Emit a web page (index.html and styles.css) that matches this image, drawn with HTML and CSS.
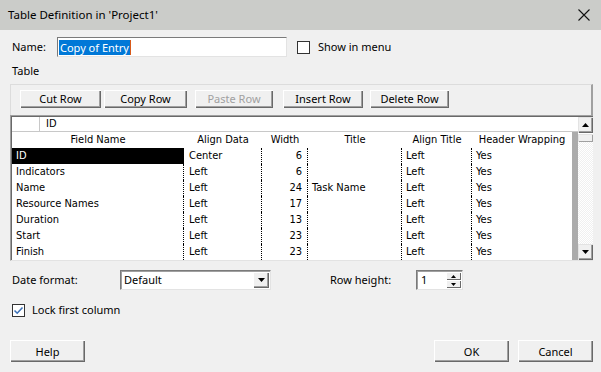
FILE: index.html
```html
<!DOCTYPE html>
<html>
<head>
<meta charset="utf-8">
<link rel="stylesheet" href="styles.css">
</head>
<body>
<div class="dialog">
  <div class="titlebar">
    <span class="title">Table Definition in 'Project1'</span>
    <svg class="close" width="12" height="12" viewBox="0 0 12 12"><path d="M0.5 0.5L11.5 11.5M11.5 0.5L0.5 11.5" stroke="#111" stroke-width="1.1" fill="none"/></svg>
  </div>
  <div class="content">
    <div class="name-row">
      <span class="lbl name-lbl">Name:</span>
      <div class="textbox"><span class="sel">Copy of Entry</span><span class="caret"></span></div>
      <span class="chk"></span>
      <span class="lbl chk-lbl">Show in menu</span>
    </div>
    <div class="lbl table-lbl">Table</div>
    <div class="tablebox">
      <div class="toolbar">
        <button class="btn tb cut">Cut Row</button>
        <button class="btn tb copy">Copy Row</button>
        <button class="btn tb paste" disabled>Paste Row</button>
        <button class="btn tb insert">Insert Row</button>
        <button class="btn tb delete">Delete Row</button>
      </div>
      <div class="gridbox">
        <div class="gridmain">
          <div class="editbar"><span class="editcell"></span><span class="edittext">ID</span></div>
          <div class="gridrow-wrap">
            <div class="grid">
              <div class="hd">Field Name</div><div class="hd">Align Data</div><div class="hd">Width</div><div class="hd">Title</div><div class="hd">Align Title</div><div class="hd">Header Wrapping</div>

              <div class="c c1 selcell">ID</div><div class="c c2">Center</div><div class="c c3">6</div><div class="c c4"></div><div class="c c5">Left</div><div class="c c6">Yes</div>
              <div class="c c1">Indicators</div><div class="c c2">Left</div><div class="c c3">6</div><div class="c c4"></div><div class="c c5">Left</div><div class="c c6">Yes</div>
              <div class="c c1">Name</div><div class="c c2">Left</div><div class="c c3">24</div><div class="c c4">Task Name</div><div class="c c5">Left</div><div class="c c6">Yes</div>
              <div class="c c1">Resource Names</div><div class="c c2">Left</div><div class="c c3">17</div><div class="c c4"></div><div class="c c5">Left</div><div class="c c6">Yes</div>
              <div class="c c1">Duration</div><div class="c c2">Left</div><div class="c c3">13</div><div class="c c4"></div><div class="c c5">Left</div><div class="c c6">Yes</div>
              <div class="c c1">Start</div><div class="c c2">Left</div><div class="c c3">23</div><div class="c c4"></div><div class="c c5">Left</div><div class="c c6">Yes</div>
              <div class="c c1">Finish</div><div class="c c2">Left</div><div class="c c3">23</div><div class="c c4"></div><div class="c c5">Left</div><div class="c c6">Yes</div>
            </div>
            <div class="graybar"></div>
          </div>
        </div>
        <div class="vscroll">
          <div class="sbtn"><svg width="7" height="4" viewBox="0 0 7 4"><path d="M3.5 0L7 4H0Z" fill="#000"/></svg></div>
          <div class="thumb"></div>
          <div class="track"></div>
          <div class="sbtn"><svg width="7" height="4" viewBox="0 0 7 4"><path d="M0 0H7L3.5 4Z" fill="#000"/></svg></div>
        </div>
      </div>
    </div>
    <div class="date-row">
      <span class="lbl date-lbl">Date format:</span>
      <div class="combo"><span class="combo-text">Default</span><span class="dropbtn"><svg width="7" height="4" viewBox="0 0 7 4"><path d="M0 0H7L3.5 4Z" fill="#000"/></svg></span></div>
      <span class="lbl rh-lbl">Row height:</span>
      <div class="spin"><span class="spin-text">1</span><span class="spinbtns"><span class="spinbtn"><svg width="5" height="3" viewBox="0 0 5 3"><path d="M2.5 0L5 3H0Z" fill="#000"/></svg></span><span class="spinbtn"><svg width="5" height="3" viewBox="0 0 5 3"><path d="M0 0H5L2.5 3Z" fill="#000"/></svg></span></span></div>
    </div>
    <div class="lock-row">
      <span class="chk checked"><svg width="11" height="11" viewBox="0 0 11 11"><path d="M1.5 5.5L4.2 8.2L9.5 2.5" stroke="#3d72b8" stroke-width="1.6" fill="none"/></svg></span>
      <span class="lbl lock-lbl">Lock first column</span>
    </div>
    <div class="btn-row">
      <button class="btn big">Help</button>
      <span class="spacer"></span>
      <button class="btn big">OK</button>
      <button class="btn big cancel">Cancel</button>
    </div>
  </div>
</div>
</body>
</html>
```

FILE: styles.css
```css
html, body {
  margin: 0;
  padding: 0;
}
body {
  width: 601px;
  height: 372px;
  background: #f0f0f0;
  font-family: "Noto Sans", "Open Sans", sans-serif;
  font-size: 11px;
  color: #000;
  overflow: hidden;
}
.dialog {
  width: 601px;
  height: 372px;
  display: flex;
  flex-direction: column;
}
.titlebar {
  height: 30px;
  background: #cbccc9;
  display: flex;
  align-items: center;
  padding: 0 11px 0 8px;
  box-sizing: border-box;
}
.title {
  flex: 1;
  font-size: 11.5px;
  line-height: 16px;
  margin-top: -1px;
}
.close {
  display: block;
}
.content {
  padding: 0 8px 0 12px;
}
.lbl {
  line-height: 16px;
  white-space: nowrap;
}
.name-row {
  margin-top: 7px;
  height: 20px;
  display: flex;
  align-items: center;
}
.name-lbl {
  width: 45px;
}
.textbox {
  width: 230px;
  height: 20px;
  box-sizing: border-box;
  background: #fff;
  border-top: 1px solid #7a7a7a;
  border-left: 1px solid #7a7a7a;
  border-right: 1px solid #e3e3e3;
  border-bottom: 1px solid #e3e3e3;
  padding: 2px 0 0 1px;
  display: flex;
  align-items: flex-start;
}
.sel {
  background: #0078d7;
  color: #fff;
  line-height: 15px;
  padding: 0 1px;
}
.caret {
  width: 1px;
  height: 15px;
  background: #d85a1a;
}
.chk {
  width: 13px;
  height: 13px;
  box-sizing: border-box;
  border: 1px solid #333;
  background: #fff;
  display: inline-flex;
  align-items: center;
  justify-content: center;
}
.name-row .chk {
  margin-left: 10px;
}
.chk-lbl {
  margin-left: 8px;
}
.table-lbl {
  margin-top: 6px;
}
.tablebox {
  margin: 5px 0 0 -2px;
  width: 583px;
}
.toolbar {
  height: 31px;
  box-sizing: border-box;
  border-top: 1px solid #dcdcdc;
  border-left: 1px solid #dcdcdc;
  border-right: 2px solid #a0a0a0;
  padding: 5px 0 0 9px;
  display: flex;
  align-items: flex-start;
}
.btn {
  font-family: "Noto Sans", "Open Sans", sans-serif;
  font-size: 11px;
  color: #000;
  background: #f0f0f0;
  border: 0;
  padding: 0;
  box-sizing: border-box;
  box-shadow: inset 1px 1px 0 #fff, inset -1px -1px 0 #696969, inset -2px -2px 0 #a0a0a0;
  display: flex;
  align-items: center;
  justify-content: center;
}
.tb {
  height: 18px;
  line-height: 16px;
}
.tb:disabled {
  color: #a0a0a0;
}
.cut { width: 81px; }
.copy { width: 83px; margin-left: 3px; }
.paste { width: 78px; margin-left: 8px; }
.insert { width: 80px; margin-left: 10px; }
.delete { width: 79px; margin-left: 7px; }

.gridbox {
  display: flex;
  border-top: 1px solid #a0a0a0;
  border-left: 1px solid #a0a0a0;
  border-bottom: 1px solid #e3e3e3;
  box-shadow: inset 1px 1px 0 #696969;
  padding: 1px 0 0 1px;
  background: #fff;
  height: 146px;
  box-sizing: border-box;
}
.gridmain {
  width: 566px;
  display: flex;
  flex-direction: column;
}
.editbar {
  height: 15px;
  box-sizing: border-box;
  border-bottom: 1px solid #c8c8c8;
  display: flex;
  font-family: "DejaVu Sans Condensed", "DejaVu Sans", sans-serif;
  font-size: 11px;
  line-height: 14px;
}
.editcell {
  width: 28px;
  border-right: 1px solid #c8c8c8;
  box-sizing: border-box;
}
.edittext {
  padding-left: 6px;
}
.gridrow-wrap {
  display: flex;
  flex: 1;
}
.grid {
  width: 560px;
  display: grid;
  grid-template-columns: 172px 78px 46px 94px 70px 100px;
  grid-auto-rows: 16px;
  font-family: "DejaVu Sans Condensed", "DejaVu Sans", sans-serif;
  font-size: 11px;
  line-height: 16px;
}
.hd {
  text-align: center;
  white-space: nowrap;
}
.c {
  white-space: nowrap;
  box-sizing: border-box;
  padding-left: 4px;
}
.c1, .c2, .c3, .c4, .c5 {
  border-right: 1px dotted #000;
}
.c2 { padding-left: 5px; }
.c3 { text-align: right; padding: 0 5px 0 0; }
.selcell {
  background: #000;
  color: #fff;
}
.graybar {
  width: 6px;
  background: #ababab;
}
.vscroll {
  width: 15px;
  display: flex;
  flex-direction: column;
}
.sbtn {
  height: 16px;
  box-sizing: border-box;
  background: #f0f0f0;
  box-shadow: inset 1px 1px 0 #e3e3e3, inset -1px -1px 0 #696969, inset -2px -2px 0 #a0a0a0;
  display: flex;
  align-items: center;
  justify-content: center;
}
.sbtn svg {
  margin: -1px 0 0 -1px;
}
.thumb {
  height: 8px;
  margin-top: 1px;
  background: #f0f0f0;
  box-shadow: inset 1px 1px 0 #e3e3e3, inset -1px -1px 0 #a0a0a0;
}
.track {
  flex: 1;
  background: repeating-conic-gradient(#f0f0f0 0 25%, #fff 0 50%) 0 0 / 2px 2px;
}
.date-row {
  margin-top: 9px;
  height: 20px;
  display: flex;
  align-items: center;
}
.date-lbl {
  width: 108px;
}
.combo {
  width: 151px;
  height: 20px;
  box-sizing: border-box;
  background: #fff;
  border-top: 1px solid #7a7a7a;
  border-left: 1px solid #7a7a7a;
  border-right: 1px solid #e3e3e3;
  border-bottom: 1px solid #e3e3e3;
  box-shadow: inset 1px 1px 0 #a0a0a0;
  display: flex;
  align-items: center;
  padding: 1px 1px 1px 3px;
}
.combo-text {
  flex: 1;
  line-height: 16px;
}
.dropbtn {
  width: 16px;
  height: 16px;
  box-sizing: border-box;
  background: #f0f0f0;
  box-shadow: inset 1px 1px 0 #fff, inset -1px -1px 0 #696969, inset -2px -2px 0 #a0a0a0;
  display: flex;
  align-items: center;
  justify-content: center;
}
.rh-lbl {
  margin-left: 59px;
  width: 86px;
}
.spin {
  width: 47px;
  height: 20px;
  box-sizing: border-box;
  background: #fff;
  border-top: 1px solid #7a7a7a;
  border-left: 1px solid #7a7a7a;
  border-right: 1px solid #e3e3e3;
  border-bottom: 1px solid #e3e3e3;
  box-shadow: inset 1px 1px 0 #a0a0a0;
  display: flex;
  align-items: center;
  padding: 1px 1px 1px 4px;
}
.spin-text {
  flex: 1;
  line-height: 16px;
}
.spinbtns {
  display: flex;
  flex-direction: column;
  width: 15px;
  height: 16px;
}
.spinbtn {
  height: 8px;
  box-sizing: border-box;
  background: #f0f0f0;
  box-shadow: inset 1px 1px 0 #fff, inset -1px -1px 0 #696969;
  display: flex;
  align-items: center;
  justify-content: center;
}
.lock-row {
  margin-top: 13px;
  height: 14px;
  display: flex;
  align-items: center;
}
.lock-row .chk {
  border-color: #333;
}
.lock-lbl {
  margin-left: 7px;
}
.btn-row {
  margin: 23px 0 0 -2px;
  display: flex;
}
.big {
  width: 75px;
  height: 22px;
}
.spacer {
  flex: 1;
}
.cancel {
  margin-left: 9px;
}
```
